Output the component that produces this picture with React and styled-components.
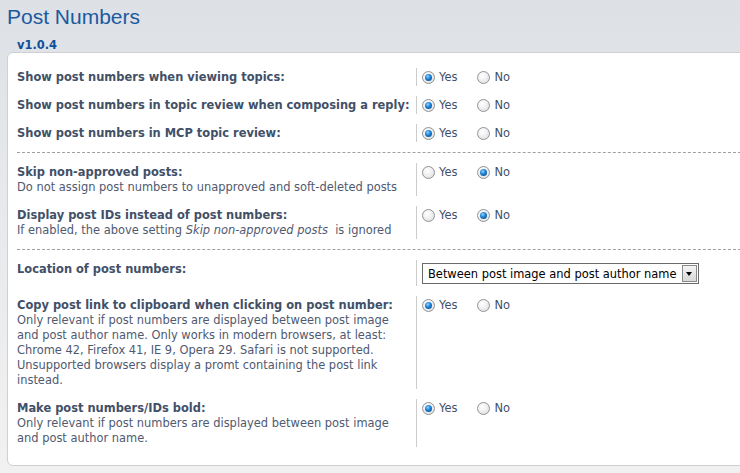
import styled, { createGlobalStyle } from "styled-components";

const GlobalStyle = createGlobalStyle`
  html, body {
    margin: 0;
    padding: 0;
  }
  body {
    background: linear-gradient(#dde0e5 0, #e6e8eb 180px, #f1f1f1 100%);
    min-height: 473px;
    font-family: "DejaVu Sans", Verdana, sans-serif;
    font-size: 11.45px;
    overflow: hidden;
  }
`;

const settings = [
  [
    { label: "Show post numbers when viewing topics:", type: "radio", value: true },
    { label: "Show post numbers in topic review when composing a reply:", type: "radio", value: true },
    { label: "Show post numbers in MCP topic review:", type: "radio", value: true },
  ],
  [
    {
      label: "Skip non-approved posts:",
      explain: "Do not assign post numbers to unapproved and soft-deleted posts",
      type: "radio",
      value: false,
    },
    {
      label: "Display post IDs instead of post numbers:",
      explain: (
        <>
          If enabled, the above setting <em>Skip non-approved posts</em>&nbsp; is ignored
        </>
      ),
      type: "radio",
      value: false,
    },
  ],
  [
    { label: "Location of post numbers:", type: "select", value: "Between post image and post author name" },
    {
      label: "Copy post link to clipboard when clicking on post number:",
      explain:
        "Only relevant if post numbers are displayed between post image and post author name. Only works in modern browsers, at least: Chrome 42, Firefox 41, IE 9, Opera 29. Safari is not supported. Unsupported browsers display a promt containing the post link instead.",
      type: "radio",
      value: true,
    },
    {
      label: "Make post numbers/IDs bold:",
      explain: "Only relevant if post numbers are displayed between post image and post author name.",
      type: "radio",
      value: true,
    },
  ],
];

const RadioInput = ({ checked, children }) => (
  <RadioLabel>
    <RadioDot $checked={checked} />
    {children}
  </RadioLabel>
);

const YesNo = ({ value }) => (
  <RadioGroup>
    <RadioInput checked={value}>Yes</RadioInput>
    <RadioInput checked={!value}>No</RadioInput>
  </RadioGroup>
);

const App = () => {
  return (
    <Page>
      <GlobalStyle />
      <Title>Post Numbers</Title>
      <Legend>v1.0.4</Legend>
      <Panel>
        {settings.map((group, gi) => (
          <Group key={gi} $first={gi === 0}>
            {group.map((item) => (
              <Row key={item.label}>
                <Term>
                  <Label>{item.label}</Label>
                  {item.explain && <Explain>{item.explain}</Explain>}
                </Term>
                <Def $select={item.type === "select"}>
                  {item.type === "radio" ? (
                    <YesNo value={item.value} />
                  ) : (
                    <Select>
                      <span>{item.value}</span>
                      <SelectArrow />
                    </Select>
                  )}
                </Def>
              </Row>
            ))}
          </Group>
        ))}
      </Panel>
    </Page>
  );
};

export default App;

const Page = styled.div`
  padding: 0 0 0 7px;
`;

const Title = styled.h1`
  margin: 0;
  padding-top: 3px;
  font-family: "Liberation Sans", Arial, sans-serif;
  font-size: 21px;
  font-weight: normal;
  line-height: 28px;
  color: #1a5aa0;
`;

const Legend = styled.div`
  margin: 7px 0 0 10px;
  height: 14px;
  line-height: 14px;
  font-weight: bold;
  font-size: 11.45px;
  color: #115098;
`;

const Panel = styled.div`
  width: 760px;
  box-sizing: border-box;
  background: #fff;
  border: 1px solid #cdd0d4;
  border-radius: 6px;
  padding: 15px 0 16px 9px;
  height: 414px;
`;

const Group = styled.div`
  border-top: ${(p) => (p.$first ? "none" : "1px dashed #a0a0a0")};
  padding-top: ${(p) => (p.$first ? "0" : "10px")};
`;

const Row = styled.div`
  display: flex;
  margin-bottom: 10px;
`;

const Term = styled.div`
  width: 399px;
  box-sizing: border-box;
  padding: 2px 6px 1px 0;
  line-height: 15px;
`;

const Label = styled.div`
  font-weight: bold;
  color: #425067;
`;

const Explain = styled.div`
  color: #4f5a70;

  em {
    font-style: italic;
  }
`;

const Def = styled.div`
  border-left: 1px solid #cccccc;
  padding: ${(p) => (p.$select ? "3px 0 2px 5px" : "2px 0 0 5px")};
  min-height: 16px;
`;

const RadioGroup = styled.div`
  display: flex;
  align-items: center;
  gap: 20px;
  line-height: 15px;
`;

const RadioLabel = styled.span`
  display: inline-flex;
  align-items: center;
  gap: 4px;
  color: #425067;
`;

const RadioDot = styled.span`
  position: relative;
  width: 11px;
  height: 11px;
  border-radius: 50%;
  border: 1px solid #8f9499;
  background: radial-gradient(circle at 40% 35%, #ffffff 0, #f2f2f2 40%, #d8d8d8 100%);
  box-sizing: content-box;

  &::after {
    content: "";
    display: ${(p) => (p.$checked ? "block" : "none")};
    position: absolute;
    left: 2px;
    top: 2px;
    width: 7px;
    height: 7px;
    border-radius: 50%;
    background: radial-gradient(circle at 40% 35%, #8fd0ff 0, #1b7fd0 45%, #0a3f7a 100%);
  }
`;

const Select = styled.div`
  display: flex;
  align-items: center;
  justify-content: space-between;
  width: 277px;
  height: 21px;
  box-sizing: border-box;
  border: 1px solid #6a6a6a;
  background: #fff;
  padding: 0 1px 0 5px;
  color: #000;
  font-family: "DejaVu Sans", Verdana, sans-serif;
`;

const SelectArrow = styled.span`
  position: relative;
  width: 15px;
  height: 17px;
  box-sizing: border-box;
  border: 1px solid #8a8a8a;
  background: linear-gradient(#f4f4f4, #d8d8d8);

  &::after {
    content: "";
    position: absolute;
    left: 3px;
    top: 6px;
    border-left: 3.5px solid transparent;
    border-right: 3.5px solid transparent;
    border-top: 4px solid #000;
  }
`;
